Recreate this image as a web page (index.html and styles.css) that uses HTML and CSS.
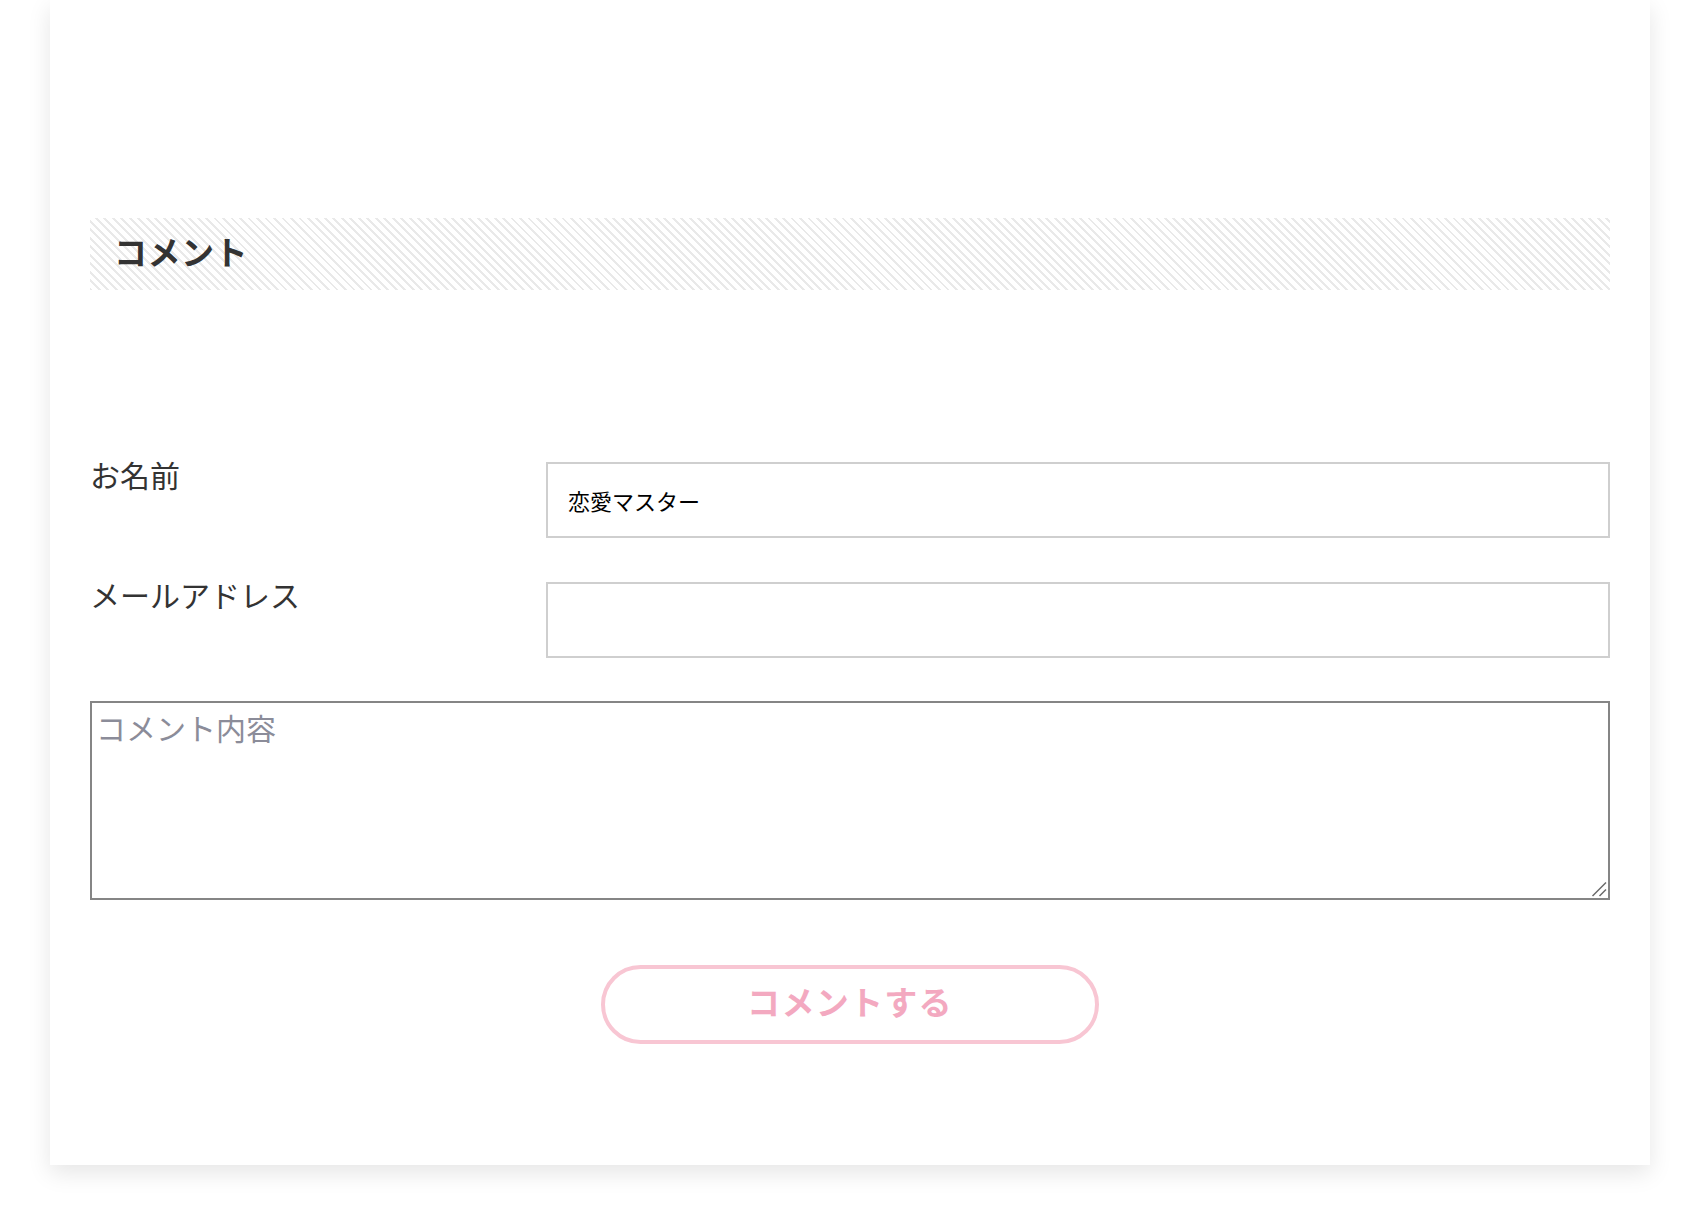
FILE: index.html
```html
<!DOCTYPE html>
<html lang="ja">
<head>
<meta charset="utf-8">
<title>コメント</title>
<link rel="stylesheet" href="styles.css">
</head>
<body>
<div class="page">
  <section class="card">
    <h2 class="heading">コメント</h2>
    <form class="form">
      <div class="row">
        <label class="label" for="name">お名前</label>
        <input class="field" id="name" type="text" value="恋愛マスター">
      </div>
      <div class="row">
        <label class="label" for="mail">メールアドレス</label>
        <input class="field" id="mail" type="email" value="">
      </div>
      <div class="comment-wrap">
        <textarea class="comment" placeholder="コメント内容"></textarea>
        <svg class="grip" width="16" height="16" viewBox="0 0 16 16" aria-hidden="true">
          <path d="M1.5 15 L15 1.5 M8.5 15 L15 8.5" stroke="#6b6b6b" stroke-width="1.5" fill="none"/>
        </svg>
      </div>
      <div class="actions">
        <button class="submit" type="button">コメントする</button>
      </div>
    </form>
  </section>
</div>
</body>
</html>
```
FILE: styles.css
```css
* { box-sizing: border-box; }

html, body {
  margin: 0;
  background: #fff;
}

body {
  font-family: "Noto Sans CJK JP", "Noto Sans", sans-serif;
  color: #333;
  overflow: hidden;
}

.page {
  padding: 0 58px 49px 50px;
}

.card {
  width: 1600px;
  background: #fff;
  padding: 218px 40px 121px;
  box-shadow: 0 8px 22px rgba(0, 0, 0, 0.10);
}

.heading {
  margin: 0;
  height: 72px;
  line-height: 66px;
  padding-left: 24px;
  font-size: 33px;
  font-weight: 700;
  color: #333;
  letter-spacing: 0.5px;
  background: repeating-linear-gradient(45deg, #e9e9e9 0 2px, #fff 2px 6px);
}

.form {
  margin-top: 172px;
  display: flex;
  flex-direction: column;
}

.row {
  display: grid;
  grid-template-columns: 30% 70%;
  align-items: start;
}

.row + .row {
  margin-top: 44px;
}

.label {
  font-size: 30px;
  line-height: 22px;
  padding-top: 1px;
  color: #333;
}

.field {
  height: 76px;
  width: 100%;
  border: 2px solid #cfcfcf;
  border-radius: 0;
  padding: 0 20px;
  font-family: inherit;
  font-size: 22px;
  color: #000;
  background: #fff;
  outline: none;
}

.comment-wrap {
  position: relative;
  margin-top: 43px;
  height: 199px;
}

.comment {
  display: block;
  width: 100%;
  height: 199px;
  border: 2px solid #858585;
  border-radius: 0;
  padding: 3px 4px;
  font-family: inherit;
  font-size: 30px;
  line-height: 1.45;
  color: #333;
  resize: none;
  outline: none;
}

.comment::placeholder {
  color: #8b8c99;
}

.grip {
  position: absolute;
  right: 3px;
  bottom: 3px;
}

.actions {
  margin-top: 65px;
  display: flex;
  justify-content: center;
}

.submit {
  width: 498px;
  height: 79px;
  border: 4px solid #f8c6d3;
  border-radius: 40px;
  background: #fff;
  color: #f3a9c0;
  font-family: inherit;
  font-size: 33px;
  font-weight: 700;
  letter-spacing: 1.3px;
  padding: 0 0 8px;
  cursor: pointer;
}
```
